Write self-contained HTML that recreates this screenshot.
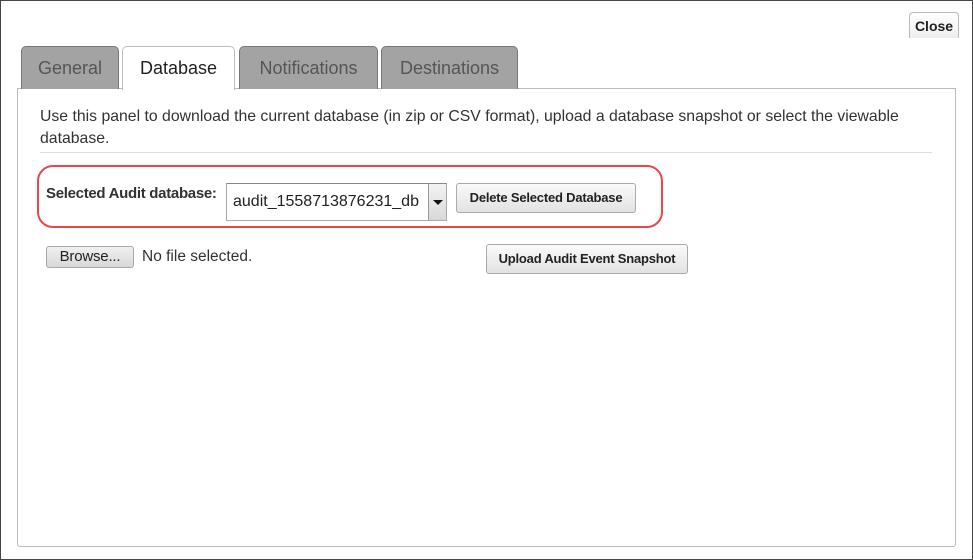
<!DOCTYPE html>
<html><head><style>
*{box-sizing:border-box;margin:0;padding:0}
body{width:973px;height:560px;background:#fff;font-family:"Liberation Sans",Arial,sans-serif;position:relative;overflow:hidden}
.frame{position:absolute;left:0;top:0;width:973px;height:560px;border:1px solid #444}
.abs{position:absolute}
.close{left:909px;top:12px;width:50px;height:26px;border:1px solid #bbb;border-bottom:none;border-radius:4px 4px 0 0;background:linear-gradient(#fff,#eee);font-weight:bold;font-size:14px;text-align:center;line-height:26px;color:#222}
.panel{left:17px;top:88px;width:939px;height:459px;border:1px solid #bbb;border-radius:0 0 3px 3px}
.tab{top:46px;height:43px;background:#a3a3a3;border:1px solid #777;border-bottom:none;border-radius:5px 5px 0 0;font-size:18px;color:#555;text-align:center;line-height:43px}
.tab.act{background:#fff;border-color:#bbb;color:#222;height:44px}
.txt{left:40px;top:106px;font-size:15.8px;line-height:22px;color:#333;width:895px}
.hr{left:40px;top:152px;width:892px;height:1px;background:#ddd}
.red{left:37px;top:165px;width:626px;height:63px;border:2px solid #e8484a;border-radius:16px}
.btn{border:1px solid #aaa;border-radius:3px;background:linear-gradient(#fafafa,#e2e2e2);font-size:13px;font-weight:bold;color:#222;text-align:center;letter-spacing:-0.2px}
</style></head><body>
<div class="frame"></div>
<div class="abs close">Close</div>
<div class="abs panel"></div>
<div class="abs tab" style="left:21px;width:98px">General</div>
<div class="abs tab act" style="left:122px;width:113px">Database</div>
<div class="abs tab" style="left:239px;width:139px">Notifications</div>
<div class="abs tab" style="left:381px;width:137px">Destinations</div>
<div class="abs txt">Use this panel to download the current database (in zip or CSV format), upload a database snapshot or select the viewable database.</div>
<div class="abs hr"></div>
<div class="abs red"></div>
<div class="abs" style="left:46px;top:185px;font-size:15px;font-weight:bold;color:#333;letter-spacing:-0.3px">Selected Audit database:</div>
<div class="abs" style="left:226px;top:183px;width:221px;height:38px;border:1px solid #aaa;border-top-color:#888;background:#fff">
<span class="abs" style="left:6px;top:9px;font-size:16px;color:#222">audit_1558713876231_db</span>
<div class="abs" style="right:0;top:0;width:18px;height:36px;border-left:1px solid #999;background:linear-gradient(#f3f3f3,#d8d8d8)"><div class="abs" style="left:4px;top:16px;border-left:5px solid transparent;border-right:5px solid transparent;border-top:5px solid #111"></div></div>
</div>
<div class="abs btn" style="left:456px;top:183px;width:180px;height:30px;line-height:28px">Delete Selected Database</div>
<div class="abs btn" style="left:46px;top:246px;width:88px;height:22px;line-height:20px;font-weight:normal;font-size:15px;background:linear-gradient(#f0f0f0,#d8d8d8)">Browse...</div>
<div class="abs" style="left:142px;top:248px;font-size:15.5px;color:#333">No file selected.</div>
<div class="abs btn" style="left:486px;top:244px;width:202px;height:30px;line-height:28px">Upload Audit Event Snapshot</div>
</body></html>
